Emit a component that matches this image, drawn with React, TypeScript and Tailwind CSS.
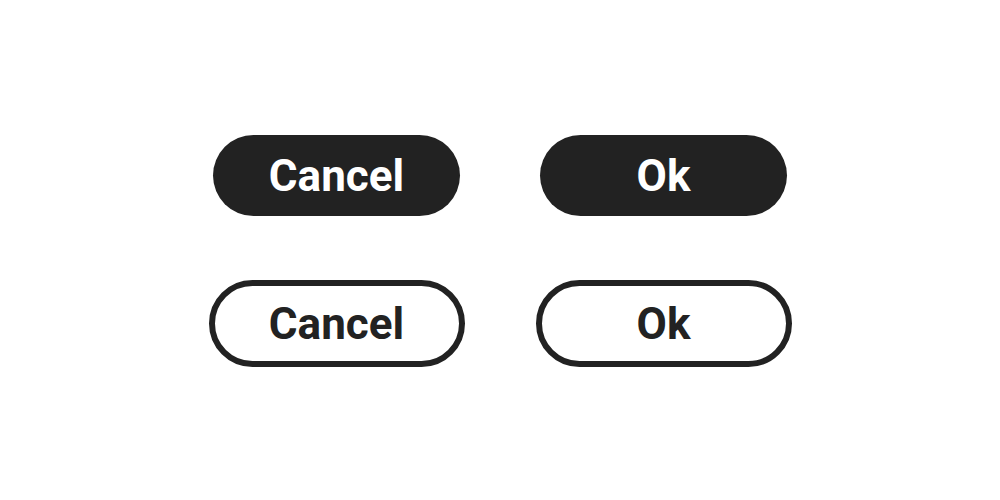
export default function App() {
  const filled =
    'flex h-[81px] w-[247px] items-center justify-center rounded-full bg-[#222222] text-white';
  const outlined =
    'flex h-[87px] w-[256px] items-center justify-center rounded-full border-[6px] border-[#222222] bg-white text-[#222222]';
  const label = "text-[44px] font-bold leading-none font-['Roboto',sans-serif]";

  return (
    <div className="min-h-[500px] w-full bg-white pt-[135px]">
      <div className="mx-auto grid w-[583px] grid-cols-[256px_256px] justify-center gap-x-[71px] gap-y-[64px]">
        <div className="flex justify-center">
          <button className={filled}>
            <span className={label}>Cancel</span>
          </button>
        </div>
        <div className="flex justify-center">
          <button className={filled}>
            <span className={label}>Ok</span>
          </button>
        </div>
        <div className="flex justify-center">
          <button className={outlined}>
            <span className={label}>Cancel</span>
          </button>
        </div>
        <div className="flex justify-center">
          <button className={outlined}>
            <span className={label}>Ok</span>
          </button>
        </div>
      </div>
    </div>
  );
}
